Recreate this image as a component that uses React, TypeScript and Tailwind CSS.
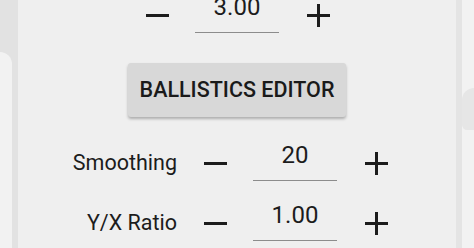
import React from 'react';

const Minus = () => (
  <svg width="23" height="23" viewBox="0 0 23 23" className="shrink-0">
    <rect x="0" y="10" width="23" height="3" fill="#1c1c1c" />
  </svg>
);

const Plus = () => (
  <svg width="23" height="23" viewBox="0 0 23 23" className="shrink-0">
    <rect x="0" y="10" width="23" height="3" fill="#1c1c1c" />
    <rect x="10" y="0" width="3" height="23" fill="#1c1c1c" />
  </svg>
);

// Number field with underline, like an Android EditText
const Field = ({ value }: { value: string }) => (
  <div className="ml-[26px] w-[84px] h-[38px] -mt-[3px] flex flex-col border-b border-[#8c8c8c]">
    <span className="text-[24px] leading-[24px] text-center text-[#1c1c1c]">{value}</span>
  </div>
);

const Stepper = ({ label, value }: { label?: string; value: string }) => (
  <div className="h-[60px] w-full flex items-center shrink-0">
    {label ? (
      <span className="w-[159px] shrink-0 text-right text-[21.5px] text-[#1c1c1c]">{label}</span>
    ) : (
      <span className="w-[101px] shrink-0" />
    )}
    <span className="ml-[27px] flex">
      <Minus />
    </span>
    <Field value={value} />
    <span className="ml-[28px] flex">
      <Plus />
    </span>
  </div>
);

export default function App() {
  return (
    <div
      className="w-[474px] h-[248px] overflow-hidden flex bg-[#e4e4e4]"
      style={{ fontFamily: 'Roboto, "Noto Sans", sans-serif' }}
    >
      {/* left neighbour card */}
      <div className="w-[18px] shrink-0 flex bg-[#e2e2e2]">
        <div className="mt-[52px] w-[12px] bg-[#f2f2f2] rounded-tr-[12px]" />
      </div>

      {/* main panel */}
      <div className="w-[438px] shrink-0 bg-[#efefef] flex flex-col items-center">
        <div className="-mt-[15px] w-full">
          <Stepper value="3.00" />
        </div>
        <button className="mt-[18px] w-[218px] h-[54px] shrink-0 rounded-[3px] bg-[#d8d8d8] shadow-[0_2px_3px_rgba(0,0,0,0.28)] text-[21.5px] font-medium text-[#1a1a1a]">
          BALLISTICS EDITOR
        </button>
        <div className="mt-[16px] w-full flex flex-col">
          <Stepper label="Smoothing" value="20" />
          <Stepper label="Y/X Ratio" value="1.00" />
        </div>
      </div>

      {/* right neighbour card */}
      <div className="flex-1 flex">
        <div className="w-[6px] bg-[#e4e4e4]" />
        <div className="flex-1 bg-[#f2f2f2] flex flex-col">
          <div className="mt-[88px] h-[42px] bg-[#e6e6e6] rounded-tl-[14px] rounded-bl-[6px]" />
        </div>
      </div>
    </div>
  );
}
